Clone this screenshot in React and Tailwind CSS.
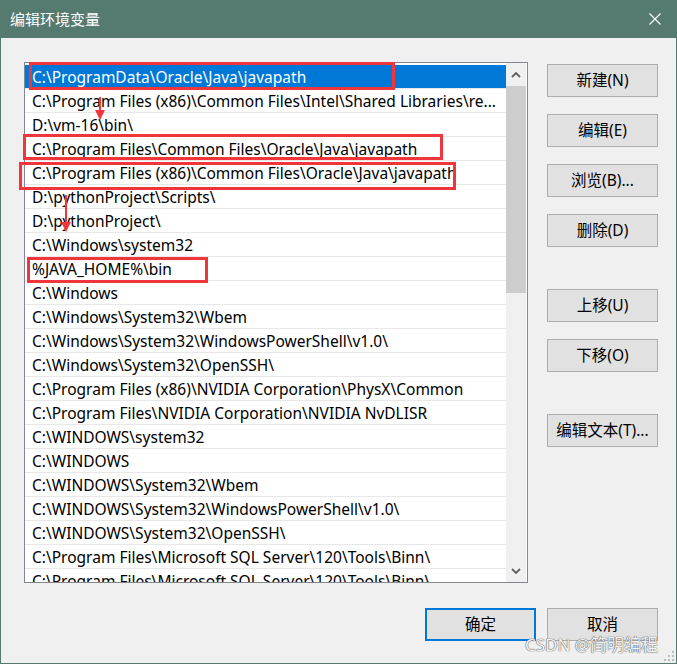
import React from "react";

const rows = [
  "C:\\ProgramData\\Oracle\\Java\\javapath",
  "C:\\Program Files (x86)\\Common Files\\Intel\\Shared Libraries\\re...",
  "D:\\vm-16\\bin\\",
  "C:\\Program Files\\Common Files\\Oracle\\Java\\javapath",
  "C:\\Program Files (x86)\\Common Files\\Oracle\\Java\\javapath",
  "D:\\pythonProject\\Scripts\\",
  "D:\\pythonProject\\",
  "C:\\Windows\\system32",
  "%JAVA_HOME%\\bin",
  "C:\\Windows",
  "C:\\Windows\\System32\\Wbem",
  "C:\\Windows\\System32\\WindowsPowerShell\\v1.0\\",
  "C:\\Windows\\System32\\OpenSSH\\",
  "C:\\Program Files (x86)\\NVIDIA Corporation\\PhysX\\Common",
  "C:\\Program Files\\NVIDIA Corporation\\NVIDIA NvDLISR",
  "C:\\WINDOWS\\system32",
  "C:\\WINDOWS",
  "C:\\WINDOWS\\System32\\Wbem",
  "C:\\WINDOWS\\System32\\WindowsPowerShell\\v1.0\\",
  "C:\\WINDOWS\\System32\\OpenSSH\\",
  "C:\\Program Files\\Microsoft SQL Server\\120\\Tools\\Binn\\",
  "C:\\Program Files\\Microsoft SQL Server\\120\\Tools\\Binn\\",
];

function Btn({ children, primary }) {
  return (
    <div
      className={
        primary
          ? "flex items-center justify-center w-[111px] h-[33px] border-2 border-[#0078d7] bg-[#e1e1e1] text-[15.5px] text-black"
          : "flex items-center justify-center w-[111px] h-[33px] border border-[#adadad] bg-[#e1e1e1] text-[15.5px] text-black"
      }
    >
      {children}
    </div>
  );
}

function RedBox({ cls }) {
  return <div className={"absolute border-[3px] border-[#f0353b] " + cls} />;
}

function Arrow({ x, y1, y2 }) {
  return (
    <svg
      className="absolute"
      style={{ left: x - 6, top: y1 }}
      width="12"
      height={y2 - y1}
      viewBox={`0 0 12 ${y2 - y1}`}
    >
      <line x1="6" y1="0" x2="6" y2={y2 - y1 - 8} stroke="#f0353b" strokeWidth="2" />
      <polygon points={`1,${y2 - y1 - 10} 11,${y2 - y1 - 10} 6,${y2 - y1}`} fill="#f0353b" />
    </svg>
  );
}

export default function App() {
  return (
    <div
      className="relative w-[677px] h-[664px] bg-[#f0f0f0] border border-t-0 border-[#557a70] overflow-hidden"
      style={{ fontFamily: '"Noto Sans", "Noto Sans CJK SC", sans-serif' }}
    >
      <div className="h-[38px] bg-[#557a70] flex items-center justify-between pl-[9px] pr-[15px]">
        <span className="text-white text-[15px] leading-none">编辑环境变量</span>
        <svg width="12" height="12" viewBox="0 0 12 12">
          <path d="M0.5 0.5 L11.5 11.5 M11.5 0.5 L0.5 11.5" stroke="#ffffff" strokeWidth="1.1" />
        </svg>
      </div>

      <div className="flex pl-[23px] pt-[24px]">
        <div className="w-[504px] h-[521px] border border-[#828790] bg-white flex">
          <div className="flex-1 overflow-hidden pt-[2px]">
            {rows.map((r, i) => (
              <div
                key={i}
                className={
                  i === 0
                    ? "h-[24px] border-b border-[#e8e8e8] flex items-center pl-[7px] pt-[3px] whitespace-nowrap text-[15.5px] bg-[#0078d7] text-white"
                    : "h-[24px] border-b border-[#e8e8e8] flex items-center pl-[7px] pt-[3px] whitespace-nowrap text-[15.5px] text-black"
                }
              >
                {r}
              </div>
            ))}
          </div>
          <div className="w-[20px] mr-[1px] bg-[#f0f0f0] flex flex-col">
            <div className="h-[23px] flex items-center justify-center">
              <svg width="10" height="6" viewBox="0 0 10 6">
                <path d="M1 5 L5 1 L9 5" stroke="#606060" strokeWidth="1.8" fill="none" />
              </svg>
            </div>
            <div className="h-[207px] bg-[#cdcdcd]" />
            <div className="flex-1" />
            <div className="h-[23px] flex items-center justify-center">
              <svg width="10" height="6" viewBox="0 0 10 6">
                <path d="M1 1 L5 5 L9 1" stroke="#606060" strokeWidth="1.8" fill="none" />
              </svg>
            </div>
          </div>
        </div>

        <div className="ml-[19px] flex flex-col pt-[2px]">
          <Btn>新建(N)</Btn>
          <div className="h-[17px]" />
          <Btn>编辑(E)</Btn>
          <div className="h-[17px]" />
          <Btn>浏览(B)...</Btn>
          <div className="h-[17px]" />
          <Btn>删除(D)</Btn>
          <div className="h-[42px]" />
          <Btn>上移(U)</Btn>
          <div className="h-[17px]" />
          <Btn>下移(O)</Btn>
          <div className="h-[42px]" />
          <Btn>编辑文本(T)...</Btn>
        </div>
      </div>

      <div className="flex justify-end gap-[11px] pr-[18px] mt-[25px]">
        <Btn primary>确定</Btn>
        <Btn>取消</Btn>
      </div>

      <RedBox cls="left-[28px] top-[62px] w-[366px] h-[28px]" />
      <RedBox cls="left-[22px] top-[134px] w-[420px] h-[26px]" />
      <RedBox cls="left-[18px] top-[162px] w-[437px] h-[28px]" />
      <RedBox cls="left-[26px] top-[257px] w-[181px] h-[26px]" />
      <Arrow x={99} y1={97} y2={120} />
      <Arrow x={65} y1={195} y2={232} />

      <div className="absolute left-[524px] top-[636px] text-[17px] leading-none text-[#f2f2f2] [text-shadow:0_0_1px_#555,0_0_1px_#555]">
        CSDN @简明编程
      </div>
      <svg className="absolute right-[2px] bottom-[2px]" width="10" height="10" viewBox="0 0 10 10">
        {[
          [8, 0], [8, 4], [4, 4], [8, 8], [4, 8], [0, 8],
        ].map(([x, y], i) => (
          <rect key={i} x={x} y={y} width="2" height="2" fill="#bdbdbd" />
        ))}
      </svg>
    </div>
  );
}
